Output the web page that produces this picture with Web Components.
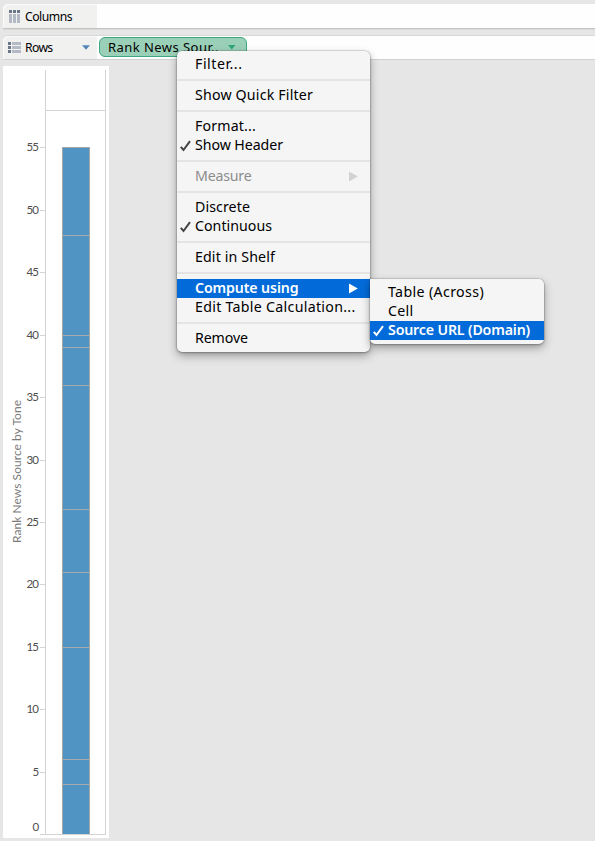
<!DOCTYPE html>
<html lang="en">
<head>
<meta charset="utf-8">
<title>Worksheet</title>
<style>
html,body{margin:0;height:100%;overflow:hidden;background:#e6e6e6;font-family:"Noto Sans","Open Sans",sans-serif;color:#000}
</style>
</head>
<body>
<work-sheet></work-sheet>
<script>
const shadow = (el, html) => { el.attachShadow({mode:'open'}).innerHTML = html; };

// Single-line label whose tracking is adjusted to an intended advance width.
customElements.define('fit-text', class extends HTMLElement {
  connectedCallback() {
    if (this.shadowRoot) return;
    shadow(this, `<style>:host{display:inline-block;white-space:pre}span{display:inline-block}</style><span><slot></slot></span>`);
    const s = this.shadowRoot.querySelector('span');
    const w = +this.getAttribute('w'), n = this.textContent.length;
    if (w) s.style.letterSpacing = ((w - s.getBoundingClientRect().width) / n).toFixed(3) + 'px';
  }
});

customElements.define('shelf-bar', class extends HTMLElement {
  connectedCallback() {
    shadow(this, `<style>
      :host{display:flex;box-sizing:border-box;background:#fefefe;border-radius:5px 0 0 0;font-size:12.2px}
      .head{display:flex;align-items:center;width:94px;box-sizing:border-box;padding-left:5px;background:#f1f1f0;border-radius:5px 0 0 0;box-shadow:inset 1px 1px #fafafa}
      .name{flex:1;padding:var(--drop,0) 0 0 4px;line-height:16px}
      .body{display:flex;flex:1;padding:1px 0 0 2px}
      svg{display:block}
    </style>
    <div class="head"><slot name="icon"></slot><div class="name"><slot name="name"></slot></div><slot name="arrow"></slot></div>
    <div class="body"><slot></slot></div>`);
  }
});

customElements.define('field-pill', class extends HTMLElement {
  connectedCallback() {
    shadow(this, `<style>
      :host{display:flex;align-items:center;box-sizing:border-box;width:148px;height:20px;padding:0 10px 0 8px;justify-content:space-between;
        background:#9bd0b8;border:1px solid #3fa780;border-radius:6px;font-size:13px;line-height:18px}
      svg{display:block;margin-top:1px}
    </style><slot></slot><svg width="8" height="5"><path d="M0 0H7.5L3.75 4.5Z" fill="#2fa67a"/></svg>`);
  }
});

customElements.define('menu-panel', class extends HTMLElement {
  connectedCallback() {
    shadow(this, `<style>
      :host{display:block;position:absolute;box-sizing:border-box;padding:4px 0;background:#f5f5f5;border-radius:5px;
        box-shadow:0 0 0 .5px rgba(0,0,0,.2),0 4px 10px rgba(0,0,0,.32),0 1px 3px rgba(0,0,0,.22)}
    </style><slot></slot>`);
  }
});

customElements.define('menu-rule', class extends HTMLElement {
  connectedCallback() {
    shadow(this, `<style>:host{display:block;padding:5px 0}div{height:2px;background:#e4e4e4}</style><div></div>`);
  }
});

customElements.define('menu-item', class extends HTMLElement {
  connectedCallback() {
    const on = this.hasAttribute('checked'), sub = this.hasAttribute('submenu');
    shadow(this, `<style>
      :host{display:flex;height:19px;align-items:center;color:#000;--tick:#444;--arrow:#fff;font-size:14.2px;line-height:19px}
      :host([active]){background:#036bd9;color:#fff;--tick:#fff;font-weight:600}
      :host([disabled]){color:#8c8c8c;--arrow:#d2d2d2}
      .mark{width:18px;height:19px;flex:none}
      .label{flex:1;position:relative;top:-1px;white-space:nowrap}
      svg{display:block}
      .arrow{margin-right:12px}
    </style>
    <div class="mark">${on ? `<svg width="18" height="19"><path d="M3.8 10.8L6.5 14L13 5.2" fill="none" stroke="var(--tick)" stroke-width="2"/></svg>` : ''}</div>
    <div class="label"><slot></slot></div>
    ${sub ? `<svg class="arrow" width="9" height="11"><path d="M0 .5V10.5L8.8 5.5Z" fill="var(--arrow)"/></svg>` : ''}`);
  }
});

customElements.define('rank-chart', class extends HTMLElement {
  connectedCallback() {
    const y = v => Math.round(834.1 - v * 12.485) - 66;
    let g = '';
    for (let v = 0; v <= 55; v += 5) {
      const s = String(v), w = s.length * 6.2;
      g += `<rect x="37" y="${y(v)}" width="5" height="1" fill="#d4d4d4"/>`;
      g += `<text x="${35.8 - w}" y="${v ? y(v) + 4 : 765}" textLength="${w}">${s}</text>`;
    }
    for (const v of [48, 40, 39, 36, 26, 21, 15, 6, 4])
      g += `<rect x="60" y="${y(v)}" width="27" height="1" fill="#a5abad"/>`;
    shadow(this, `<style>
      :host{display:block;width:106px;height:772px;background:#fff}
      svg{display:block}
      text{font-family:Lato,sans-serif;font-size:11.5px;fill:#4e4e4e}
      .title{font-size:12px;fill:#7b7b7b}
    </style>
    <svg width="106" height="772" shape-rendering="crispEdges">
      <g fill="#d4d4d4">
        <rect x="42" y="4" width="1" height="765"/><rect x="102" y="4" width="1" height="765"/>
        <rect x="42" y="44" width="61" height="1"/><rect x="37" y="768" width="66" height="1"/>
      </g>
      <rect x="59" y="81" width="28" height="687" fill="#5094c4"/>
      <path d="M59.5 768V81.5H86.5V768" fill="none" stroke="#a5a5a5"/>
      ${g}
      <text class="title" transform="translate(18 477) rotate(-90)" textLength="143">Rank News Source by Tone</text>
    </svg>`);
  }
});

customElements.define('work-sheet', class extends HTMLElement {
  connectedCallback() {
    shadow(this, `<style>
      :host{display:block;box-sizing:border-box;width:595px;height:841px;padding:4px 0 3px 3px;background:#e6e6e6;overflow:hidden;position:relative}
      .columns{height:24px;--drop:2px;box-shadow:0 1px #c3c3c3,0 2px #dadada}
      .rows{height:23px;margin-top:8px;box-shadow:0 1px #d2d2d2,0 -1px #d9d9d9}
      rank-chart{margin-top:7px}
      .main{left:177px;top:51px;width:193px;height:301px}
      .sub{left:370px;top:279px;width:174px;height:65px;border-radius:0 5px 5px 5px}
      svg{display:block}
    </style>
    <shelf-bar class="columns">
      <svg slot="icon" width="13" height="13" style="margin-top:1px" shape-rendering="crispEdges"><g fill="#6b7689"><path d="M1 0h3v3h-3zM5 0h3v3h-3zM9 0h3v3h-3z"/></g><g fill="#b3bac6"><path d="M1 4h3v9h-3zM5 4h3v9h-3zM9 4h3v9h-3z"/></g></svg>
      <fit-text slot="name" w="47">Columns</fit-text>
    </shelf-bar>
    <shelf-bar class="rows">
      <svg slot="icon" width="13" height="11" shape-rendering="crispEdges"><g fill="#6b7689"><path d="M0 0h3v3h-3zM0 4h3v3h-3zM0 8h3v3h-3z"/></g><g fill="#b3bac6"><path d="M4 0h9v3h-9zM4 4h9v3h-9zM4 8h9v3h-9z"/></g></svg>
      <fit-text slot="name" w="27.5">Rows</fit-text>
      <svg slot="arrow" width="15" height="5"><path d="M0 .3H8L4 4.7Z" fill="#5586b8"/></svg>
      <field-pill><fit-text w="111">Rank News Sour..</fit-text></field-pill>
    </shelf-bar>
    <rank-chart></rank-chart>
    <menu-panel class="main">
      <menu-item><fit-text w="47.5">Filter...</fit-text></menu-item><menu-rule></menu-rule>
      <menu-item><fit-text w="118">Show Quick Filter</fit-text></menu-item><menu-rule></menu-rule>
      <menu-item><fit-text w="61">Format...</fit-text></menu-item>
      <menu-item checked><fit-text w="88">Show Header</fit-text></menu-item><menu-rule></menu-rule>
      <menu-item disabled submenu><fit-text w="56.5">Measure</fit-text></menu-item><menu-rule></menu-rule>
      <menu-item><fit-text w="55">Discrete</fit-text></menu-item>
      <menu-item checked><fit-text w="77">Continuous</fit-text></menu-item><menu-rule></menu-rule>
      <menu-item><fit-text w="80">Edit in Shelf</fit-text></menu-item><menu-rule></menu-rule>
      <menu-item active submenu><fit-text w="103.5">Compute using</fit-text></menu-item>
      <menu-item><fit-text w="160.5">Edit Table Calculation...</fit-text></menu-item><menu-rule></menu-rule>
      <menu-item><fit-text w="53">Remove</fit-text></menu-item>
    </menu-panel>
    <menu-panel class="sub">
      <menu-item><fit-text w="96">Table (Across)</fit-text></menu-item>
      <menu-item><fit-text w="25.5">Cell</fit-text></menu-item>
      <menu-item checked active><fit-text w="142">Source URL (Domain)</fit-text></menu-item>
    </menu-panel>`);
  }
});
</script>
</body>
</html>
